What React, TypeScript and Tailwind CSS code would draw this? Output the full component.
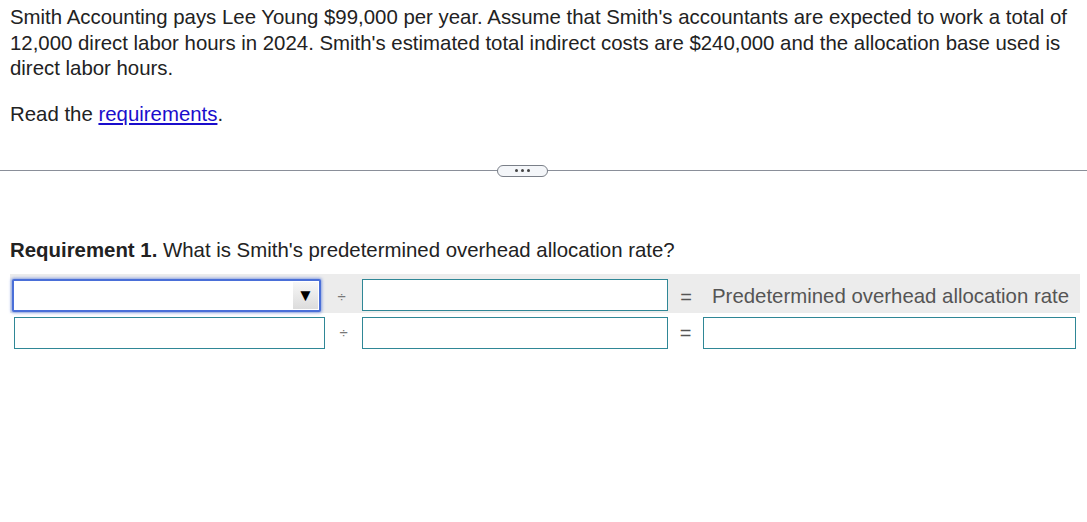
const inputCls = 'h-[32px] border border-[#2f8796] bg-white';

export default function App() {
  return (
    <div className="min-h-[522px] bg-white font-['Liberation_Sans',Arial,sans-serif] text-[#222]">
      <div className="px-[10px] pt-[5px] text-[20.4px] leading-[25.5px]">
        <p>
          Smith Accounting pays Lee Young $99,000 per year. Assume that Smith's accountants are expected to work a total of
          12,000 direct labor hours in 2024. Smith's estimated total indirect costs are $240,000 and the allocation base used is
          direct labor hours.
        </p>
        <p className="mt-[20.5px]">
          Read the <a href="#" className="text-[#1a0dcc] underline">requirements</a>.
        </p>
      </div>

      <div className="relative mt-[37px] flex h-[12px] items-center">
        <div className="h-px w-full bg-[#8a8f99]" />
        <button className="absolute left-[497px] top-0 flex h-[12px] w-[51px] items-center justify-center gap-[3px] rounded-full border border-[#7a7f88] bg-[#f4f6f9]">
          <span className="h-[3px] w-[3px] rounded-full bg-[#444]" />
          <span className="h-[3px] w-[3px] rounded-full bg-[#444]" />
          <span className="h-[3px] w-[3px] rounded-full bg-[#444]" />
        </button>
      </div>

      <p className="mt-[61px] px-[10px] text-[20.4px] leading-[25.5px]">
        <span className="font-bold">Requirement 1.</span> What is Smith's predetermined overhead allocation rate?
      </p>

      <div className="mt-[11px] ml-[10px] w-[1070px]">
        <div className="flex h-[39px] items-center bg-[#ececec]">
          <div className="ml-[2px] mt-[3px] flex h-[33px] w-[309px] items-center justify-end rounded-[2px] border-2 border-[#4a6fd8] bg-white shadow-[0_0_3px_1px_rgba(74,111,216,0.6)]">
            <div className="mr-[1px] flex h-[27px] w-[25px] items-center justify-center bg-gradient-to-b from-[#f7f7f7] to-[#dcdcdc]">
              <span className="text-[17px] leading-none text-black">▼</span>
            </div>
          </div>
          <span className="w-[41px] pt-[7px] text-center text-[15px] text-[#777]">÷</span>
          <div className={`${inputCls} mt-[3px] w-[306px]`} />
          <span className="w-[36px] pt-[6px] text-center text-[20px] text-[#555]">=</span>
          <span className="ml-[8px] pt-[6px] text-[20.4px] text-[#555]">Predetermined overhead allocation rate</span>
        </div>
        <div className="mt-[4px] flex h-[32px] items-center">
          <div className={`${inputCls} ml-[4px] w-[311px]`} />
          <span className="w-[37px] text-center text-[15px] text-[#777]">÷</span>
          <div className={`${inputCls} w-[306px]`} />
          <span className="w-[35px] text-center text-[20px] text-[#555]">=</span>
          <div className={`${inputCls} w-[373px]`} />
        </div>
      </div>
    </div>
  );
}
